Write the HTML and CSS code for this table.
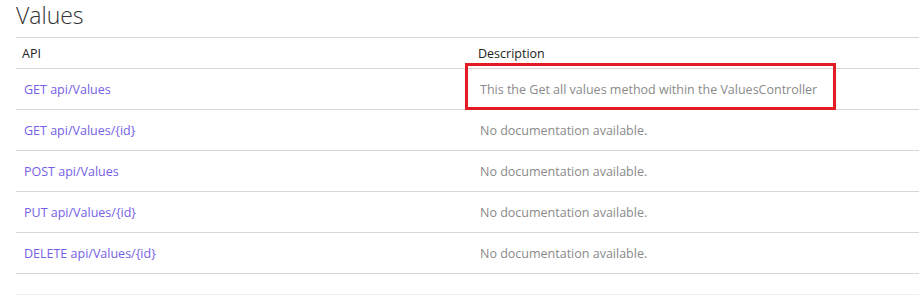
FILE: index.html
```html
<!DOCTYPE html>
<html>
<head>
<meta charset="utf-8">
<link rel="stylesheet" href="styles.css">
</head>
<body>
<div class="page">
  <h2 class="title">Values</h2>
  <table class="api-table">
    <thead>
      <tr><th class="col-api">API</th><th class="col-desc">Description</th></tr>
    </thead>
    <tbody>
      <tr><td class="col-api"><a href="#">GET api/Values</a></td><td class="col-desc highlighted">This the Get all values method within the ValuesController<span class="highlight-box"></span></td></tr>
      <tr><td class="col-api"><a href="#">GET api/Values/{id}</a></td><td class="col-desc">No documentation available.</td></tr>
      <tr><td class="col-api"><a href="#">POST api/Values</a></td><td class="col-desc">No documentation available.</td></tr>
      <tr><td class="col-api"><a href="#">PUT api/Values/{id}</a></td><td class="col-desc">No documentation available.</td></tr>
      <tr><td class="col-api"><a href="#">DELETE api/Values/{id}</a></td><td class="col-desc">No documentation available.</td></tr>
    </tbody>
  </table>
  <div class="footer-rule"></div>
</div>
</body>
</html>
```
FILE: styles.css
```css
html, body {
  margin: 0;
  padding: 0;
  background: #fff;
}
body {
  font-family: "Open Sans", "Noto Sans", sans-serif;
  font-size: 12.5px;
  color: #333;
  overflow: hidden;
}
.page {
  padding-left: 16px;
}
.title {
  margin: 0;
  height: 37px;
  line-height: 30px;
  font-size: 23px;
  font-weight: 300;
  color: #333;
}
.api-table {
  width: 903px;
  border-collapse: collapse;
  border-top: 1px solid #d6d6d6;
}
.api-table th {
  height: 30px;
  font-weight: 400;
  font-size: 12.5px;
  text-align: left;
  color: #222;
  border-bottom: 1px solid #d6d6d6;
  padding: 0 6px;
}
.api-table td {
  height: 40px;
  border-bottom: 1px solid #d6d6d6;
  padding: 0 8px;
  color: #8a8a8a;
}
.col-api {
  width: 440px;
}
.api-table a {
  color: #7461e6;
  text-decoration: none;
}
.highlighted {
  position: relative;
}
.highlight-box {
  position: absolute;
  left: -7px;
  top: -6px;
  width: 371px;
  height: 47px;
  box-sizing: border-box;
  border: 3px solid #e31b23;
}
.footer-rule {
  margin-top: 20px;
  width: 903px;
  border-top: 1px solid #eeeeee;
}
```
